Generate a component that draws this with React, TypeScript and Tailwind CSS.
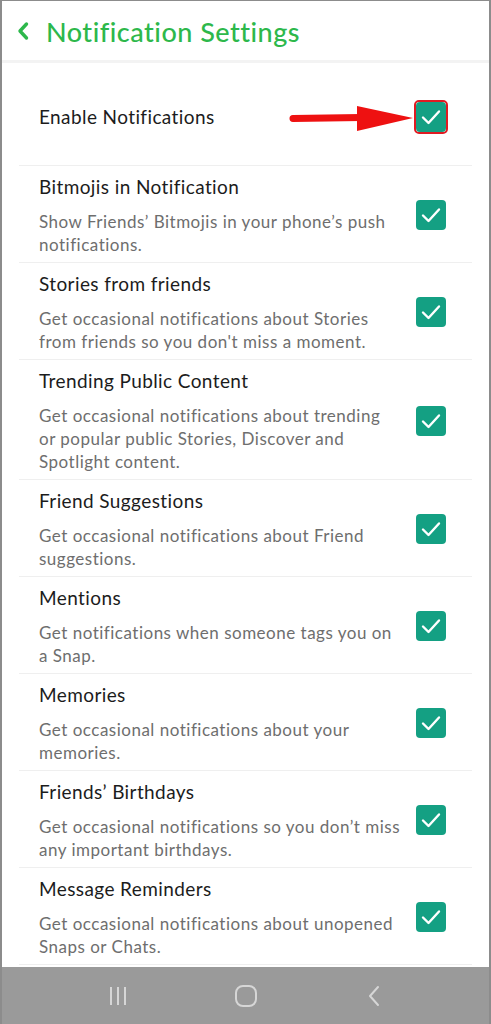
import { useState } from "react";

type Setting = {
  title: string;
  desc: string;
};

const settings: Setting[] = [
  { title: "Bitmojis in Notification", desc: "Show Friends’ Bitmojis in your phone’s push notifications." },
  { title: "Stories from friends", desc: "Get occasional notifications about Stories from friends so you don't miss a moment." },
  { title: "Trending Public Content", desc: "Get occasional notifications about trending or popular public Stories, Discover and Spotlight content." },
  { title: "Friend Suggestions", desc: "Get occasional notifications about Friend suggestions." },
  { title: "Mentions", desc: "Get notifications when someone tags you on a Snap." },
  { title: "Memories", desc: "Get occasional notifications about your memories." },
  { title: "Friends’ Birthdays", desc: "Get occasional notifications so you don’t miss any important birthdays." },
  { title: "Message Reminders", desc: "Get occasional notifications about unopened Snaps or Chats." },
];

function Checkbox({ checked, onClick }: { checked: boolean; onClick: () => void }) {
  return (
    <button
      onClick={onClick}
      className={`w-[30px] h-[30px] rounded-[4px] flex items-center justify-center shrink-0 ${
        checked ? "bg-[#14a083]" : "bg-white border-2 border-[#c8c8c8]"
      }`}
    >
      {checked && (
        <svg width="20" height="16" viewBox="0 0 20 16" fill="none">
          <path d="M2 8.5l5.5 5.5L18 2.5" stroke="white" strokeWidth="2.4" strokeLinecap="round" strokeLinejoin="round" />
        </svg>
      )}
    </button>
  );
}

export default function App() {
  const [enabled, setEnabled] = useState(true);
  const [checks, setChecks] = useState(settings.map(() => true));

  const toggle = (i: number) => setChecks((c) => c.map((v, j) => (j === i ? !v : v)));

  return (
    <div
      className="w-full h-[1024px] flex flex-col bg-white border-x-2 border-t border-[#8c8c8c] overflow-hidden"
      style={{ fontFamily: "Lato, 'Noto Sans', sans-serif" }}
    >
      {/* header */}
      <div className="h-[59px] flex items-center pl-[14px] shrink-0">
        <svg width="14" height="20" viewBox="0 0 14 20" fill="none">
          <path d="M10.5 3L4 10l6.5 7" stroke="#2db84b" strokeWidth="3.4" strokeLinecap="round" strokeLinejoin="round" />
        </svg>
        <h1 className="ml-[16px] mt-[2px] text-[27px] font-medium text-[#2db84b] leading-none tracking-[0.5px]">
          Notification Settings
        </h1>
      </div>
      <div className="h-[3px] bg-[#f3f3f3] shrink-0" />

      {/* master toggle */}
      <div className="relative mx-[17px] h-[103px] shrink-0 flex items-center pt-[6px] pl-[20px] pr-[24px] border-b border-[#efefef]">
        <span className="flex-1 text-[19px] tracking-[0.4px] text-[#1c1c1c]">Enable Notifications</span>
        <svg className="absolute left-[270px] top-[40px]" width="126" height="30" viewBox="0 0 126 30">
          <path d="M4 15.5L72 14.5" stroke="#ee1111" strokeWidth="7" strokeLinecap="round" />
          <path d="M68 3L124 15L68 28Z" fill="#ee1111" />
        </svg>
        <div className="rounded-[5px] border-2 border-[#e01b22]">
          <Checkbox checked={enabled} onClick={() => setEnabled(!enabled)} />
        </div>
      </div>

      {/* settings list */}
      {settings.map((s, i) => (
        <div
          key={s.title}
          className="mx-[17px] flex items-center pl-[20px] pr-[26px] pt-[8px] pb-[6px] border-b border-[#efefef] shrink-0"
        >
          <div className="flex-1 pr-[15px]">
            <div className="text-[19px] leading-[26px] tracking-[0.4px] text-[#1c1c1c]">{s.title}</div>
            <p className="mt-[10px] text-[17px] leading-[23px] tracking-[0.5px] text-[#6e6e6e]">{s.desc}</p>
          </div>
          <Checkbox checked={checks[i]} onClick={() => toggle(i)} />
        </div>
      ))}

      {/* android nav bar */}
      <div className="mt-[2px] flex-1 bg-[#9a9a9a] flex items-center justify-center">
        <div className="w-[128px] flex justify-center">
          <svg width="20" height="20" viewBox="0 0 20 20">
            <rect x="2" y="1" width="2" height="18" fill="#d6d6d6" />
            <rect x="9" y="1" width="2" height="18" fill="#d6d6d6" />
            <rect x="16" y="1" width="2" height="18" fill="#d6d6d6" />
          </svg>
        </div>
        <div className="w-[128px] flex justify-center">
          <svg width="24" height="24" viewBox="0 0 24 24" fill="none">
            <rect x="2" y="2" width="20" height="20" rx="7" stroke="#d6d6d6" strokeWidth="2" />
          </svg>
        </div>
        <div className="w-[128px] flex justify-center">
          <svg width="14" height="22" viewBox="0 0 14 22" fill="none">
            <path d="M11 2L3 11l8 9" stroke="#d6d6d6" strokeWidth="2" strokeLinecap="round" strokeLinejoin="round" />
          </svg>
        </div>
      </div>
    </div>
  );
}
